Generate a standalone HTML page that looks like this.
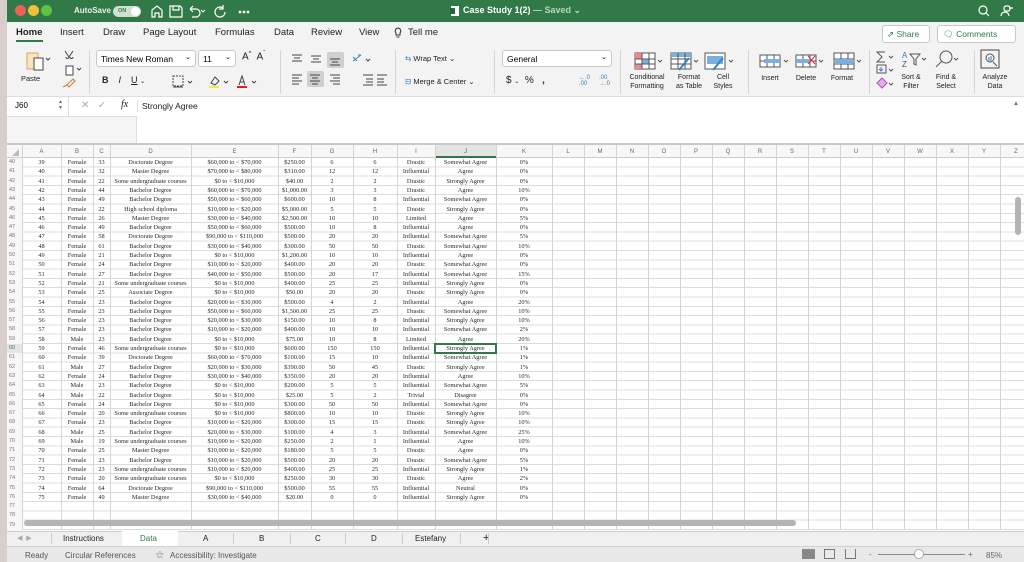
<!DOCTYPE html>
<html><head><meta charset="utf-8">
<style>
*{box-sizing:border-box;margin:0;padding:0}
body{width:1024px;height:562px;overflow:hidden;background:#d8cfcc;font-family:"Liberation Sans",sans-serif;position:relative}
.abs{position:absolute}
#win{position:absolute;left:7px;top:0;width:1017px;height:562px;background:#f3f3f3;overflow:hidden}
#title{position:absolute;left:0;top:0;width:1017px;height:22px;background:#317a48}
.tl{position:absolute;top:5px;width:11px;height:11px;border-radius:50%}
.wt{color:#fff;font-size:8px;position:absolute}
.tab{position:absolute;top:27px;font-size:9.5px;color:#222}
.t8{position:absolute;font-size:8px;color:#222;white-space:nowrap}
.t7{position:absolute;font-size:7px;color:#222;white-space:nowrap;text-align:center;line-height:8.5px}
.sep{position:absolute;top:50px;width:1px;height:44px;background:#d4d4d4}
.box{position:absolute;background:#fff;border:1px solid #c8c8c8;border-radius:3px}
#grid{position:absolute;left:0;top:143px;width:1017px;height:388px;background:#fff}
.vl{position:absolute;top:2px;width:1px;height:385px;background:#d4d4d4}
.r{position:absolute;left:0;height:9.3px;display:flex;font-family:"Liberation Serif",serif;font-size:6.3px;color:#2a2a2a;line-height:9.3px;white-space:nowrap}
.r span{display:block;text-align:center;overflow:hidden}
.r span:first-child{text-align:left;padding-left:2px;font-family:"Liberation Sans",sans-serif;color:#777;font-size:5.5px}
.w0{width:15px}.w1{width:39px}.w2{width:32px}.w3{width:17px}.w4{width:81px}.w5{width:87px}.w6{width:33px}.w7{width:42px}.w8{width:44px}.w9{width:38px}.w10{width:61px}.w11{width:56px}
.ch{position:absolute;top:6px;font-size:6px;color:#666;text-align:center}
</style></head><body>
<div id="win">
<div id="title">
 <div class="tl" style="left:8px;background:#ee5f57"></div>
 <div class="tl" style="left:21px;background:#f4bd3a"></div>
 <div class="tl" style="left:34px;background:#5ec443"></div>
 <div class="wt" style="left:67px;top:6px;font-weight:bold;opacity:.9">AutoSave</div>
 <div class="abs" style="left:106px;top:6px;width:28px;height:11px;border-radius:6px;background:#cfe0d3"><span style="position:absolute;left:5px;top:2px;font-size:5.5px;color:#317a48;font-weight:bold">ON</span><span style="position:absolute;right:1px;top:1px;width:9px;height:9px;border-radius:50%;background:#fff"></span></div>
 <svg class="abs" style="left:143px;top:4px" width="115" height="15" fill="none" stroke="#fff" stroke-width="1.2"><path d="M2 13V6l5-4 5 4v7h-3V9H5v4z"/><path d="M22 2h8l2 2v9H20V2zM23 2v4h6V2"/><path d="M40 5h6a4 4 0 010 8h-4M40 5l3-3M40 5l3 3"/><path d="M51 6l2 2 2-2" stroke-width="1"/><path d="M73 4a5 5 0 10 2 4M73 1v4h-4"/><circle cx="90" cy="8" r=".8" fill="#fff"/><circle cx="94" cy="8" r=".8" fill="#fff"/><circle cx="98" cy="8" r=".8" fill="#fff"/></svg>
 <svg class="abs" style="left:443px;top:5px" width="10" height="12"><rect x="1" y="1" width="8" height="10" fill="#fff"/><rect x="0" y="3" width="5" height="6" fill="#1d6b3a"/></svg>
 <div class="wt" style="left:456px;top:5px;font-size:9px;font-weight:bold">Case Study 1(2) <span style="color:#b9d4c1">— Saved ⌄</span></div>
 <svg class="abs" style="left:970px;top:4px" width="40" height="14" fill="none" stroke="#fff" stroke-width="1.2"><circle cx="6" cy="6" r="4"/><path d="M9 9l3 3"/><rect x="27" y="2" width="6" height="5" rx="2"/><path d="M24 12a4 4 0 018 0M32 4h4"/></svg>
</div>
<!-- tabs -->
<div class="tab" style="left:9px;font-weight:bold">Home</div>
<div class="abs" style="left:9px;top:40px;width:27px;height:2px;background:#317a48"></div>
<div class="tab" style="left:53px">Insert</div>
<div class="tab" style="left:96px">Draw</div>
<div class="tab" style="left:136px">Page Layout</div>
<div class="tab" style="left:208px">Formulas</div>
<div class="tab" style="left:267px">Data</div>
<div class="tab" style="left:304px">Review</div>
<div class="tab" style="left:352px">View</div>
<svg class="abs" style="left:387px;top:27px" width="8" height="11" fill="none" stroke="#333" stroke-width="1"><path d="M4 1a3 3 0 00-2 5l0 2h4v-2a3 3 0 00-2-5zM2.5 10h3"/></svg>
<div class="tab" style="left:401px">Tell me</div>
<div class="box" style="left:875px;top:25px;width:48px;height:18px"><span style="position:absolute;left:4px;top:3px;font-size:8.5px;color:#317a48">⇗ Share</span></div>
<div class="box" style="left:930px;top:25px;width:79px;height:18px"><span style="position:absolute;left:5px;top:3px;font-size:8.5px;color:#317a48">🗨 Comments</span></div>
<!-- ribbon -->
<svg class="abs" style="left:12px;top:49px" width="65" height="44" fill="none" stroke="#444" stroke-width="1"><rect x="8" y="4" width="11" height="16" fill="#fbe4c3" stroke="#e0a050"/><rect x="15" y="9" width="9" height="12" fill="#fff"/><path d="M27 9l2 2 2-2"/><path d="M46 2l4 6 4-6M47 8a1.5 1.5 0 103 0M51 8a1.5 1.5 0 103 0"/><rect x="47" y="17" width="7" height="9" fill="#fff"/><path d="M58 19l2 2 2-2"/><path d="M48 36l6-6 2 2-6 6z" stroke="#d08030"/><path d="M44 38l4-2" stroke="#d08030"/></svg>
<div class="t8" style="left:14px;top:74px;font-size:7.5px">Paste</div>
<div class="sep" style="left:82px"></div>
<div class="box" style="left:89px;top:50px;width:100px;height:17px"><span style="position:absolute;left:4px;top:3px;font-size:8.5px">Times New Roman</span><span style="position:absolute;right:4px;top:2px;font-size:7px">⌄</span></div>
<div class="box" style="left:191px;top:50px;width:38px;height:17px"><span style="position:absolute;left:4px;top:3px;font-size:8.5px">11</span><span style="position:absolute;right:4px;top:2px;font-size:7px">⌄</span></div>
<div class="t8" style="left:235px;top:51px;font-size:10px">A<sup style="font-size:6px">^</sup>&nbsp; A<sup style="font-size:6px">ˇ</sup></div>
<div class="t8" style="left:95px;top:75px;font-size:9px"><b>B</b>&nbsp;&nbsp;&nbsp;&nbsp;<i>I</i>&nbsp;&nbsp;&nbsp;&nbsp;<u>U</u> <span style="font-size:6px">⌄</span></div>
<svg class="abs" style="left:164px;top:74px" width="110" height="16" fill="none" stroke="#444" stroke-width="1"><rect x="2" y="2" width="10" height="10" stroke-dasharray="2 1"/><path d="M2 13h10"/><path d="M17 7l2 2 2-2"/><path d="M40 9l4-6 4 4-4 4z"/><rect x="38" y="12" width="10" height="2" fill="#f5e93c" stroke="none"/><path d="M53 7l2 2 2-2"/><path d="M68 11l3-9 3 9M69 8h4"/><rect x="66" y="12" width="10" height="2" fill="#e02020" stroke="none"/><path d="M81 7l2 2 2-2"/></svg>
<div class="sep" style="left:273px"></div>
<svg class="abs" style="left:282px;top:52px" width="100" height="38" stroke="#444" stroke-width="1"><path d="M3 3h10M5 6h6M3 9h10M22 4h10M24 7h6M22 10h10"/><rect x="38" y="0" width="17" height="16" rx="2" fill="#cfcfcf" stroke="none"/><path d="M41 7h10M43 10h6M41 13h10"/><path d="M3 23h10M3 26h7M3 29h10M3 32h7"/><rect x="18" y="19" width="17" height="16" rx="2" fill="#cfcfcf" stroke="none"/><path d="M21 23h10M23 26h6M21 29h10M23 32h6M41 23h10M44 26h7M41 29h10M44 32h7"/><path d="M64 9l8-6M72 3l-3 0M64 5l4 4" stroke="#3a80c0" fill="none"/><path d="M77 7l2 2 2-2" fill="none"/><path d="M74 23h10M77 27h7M77 30h7M74 33h10" /><path d="M88 23h10M88 27h7M88 30h7M88 33h10" /></svg>
<div class="sep" style="left:388px"></div>
<div class="t8" style="left:398px;top:54px;font-size:7.5px"><span style="color:#3a80c0">⇆</span> Wrap Text ⌄</div>
<div class="t8" style="left:398px;top:77px;font-size:7.5px"><span style="color:#3a80c0">⊟</span> Merge &amp; Center ⌄</div>
<div class="sep" style="left:487px"></div>
<div class="box" style="left:495px;top:50px;width:110px;height:17px"><span style="position:absolute;left:4px;top:3px;font-size:8.5px">General</span><span style="position:absolute;right:4px;top:2px;font-size:7px">⌄</span></div>
<div class="t8" style="left:499px;top:75px;font-size:10px">$ <span style="font-size:6px">⌄</span> &nbsp;%&nbsp;&nbsp; <b>,</b></div>
<div class="t8" style="left:572px;top:75px;font-size:6px;color:#3a80c0;line-height:6px">←.0<br>.00</div>
<div class="t8" style="left:592px;top:75px;font-size:6px;color:#3a80c0;line-height:6px">.00<br>→.0</div>
<div class="sep" style="left:613px"></div>
<svg class="abs" style="left:626px;top:50px" width="110" height="22" stroke="#555" stroke-width="1" fill="none"><rect x="2" y="3" width="20" height="16" fill="#fff"/><rect x="2" y="3" width="7" height="6" fill="#e88" stroke="none"/><rect x="9" y="9" width="7" height="5" fill="#7ab0e0" stroke="none"/><rect x="2" y="14" width="7" height="5" fill="#e88" stroke="none"/><path d="M2 9h20M2 14h20M9 3v16M16 3v16"/><path d="M25 10l2 2 2-2"/><rect x="38" y="3" width="20" height="16" fill="#fff"/><rect x="38" y="3" width="20" height="4" fill="#7ab0e0" stroke="none"/><path d="M38 9h20M38 14h20M45 3v16M52 3v16"/><path d="M46 20l10-12" stroke="#3a80c0" stroke-width="2"/><path d="M61 10l2 2 2-2"/><rect x="72" y="3" width="20" height="16" fill="#fff"/><rect x="74" y="6" width="16" height="8" fill="#7ab0e0" stroke="none"/><path d="M80 20l10-12" stroke="#3a80c0" stroke-width="2"/><path d="M96 10l2 2 2-2"/></svg>
<div class="t7" style="left:615px;top:74px;width:50px">Conditional<br>Formatting</div>
<div class="t7" style="left:662px;top:74px;width:40px">Format<br>as Table</div>
<div class="t7" style="left:700px;top:74px;width:32px">Cell<br>Styles</div>
<div class="sep" style="left:741px"></div>
<svg class="abs" style="left:751px;top:50px" width="115" height="22" stroke="#555" stroke-width="1" fill="none"><rect x="2" y="5" width="20" height="12" fill="#fff"/><path d="M2 11h20M9 5v12M16 5v12"/><rect x="6" y="9" width="16" height="4" fill="#7ab0e0" stroke="none"/><path d="M26 10l2 2 2-2"/><rect x="38" y="5" width="20" height="12" fill="#fff"/><path d="M38 11h20M45 5v12M52 5v12"/><rect x="38" y="9" width="14" height="4" fill="#7ab0e0" stroke="none"/><path d="M50 6l7 8M57 6l-7 8" stroke="#e03030"/><path d="M61 10l2 2 2-2"/><rect x="76" y="3" width="20" height="16" fill="#fff"/><path d="M76 9h20M76 14h20M83 3v16M90 3v16"/><rect x="77" y="9" width="18" height="5" fill="#7ab0e0" stroke="none"/><path d="M99 10l2 2 2-2"/></svg>
<div class="t7" style="left:746px;top:75px;width:34px">Insert</div>
<div class="t7" style="left:781px;top:75px;width:36px">Delete</div>
<div class="t7" style="left:817px;top:75px;width:36px">Format</div>
<div class="sep" style="left:862px"></div>
<svg class="abs" style="left:866px;top:49px" width="130" height="44" stroke="#555" stroke-width="1" fill="none"><path d="M12 3H4l5 5-5 5h8"/><path d="M16 7l2 2 2-2"/><rect x="4" y="16" width="9" height="8"/><path d="M8 18v4M6 20l2 2 2-2" stroke="#3a80c0"/><path d="M16 20l2 2 2-2"/><path d="M4 34l5-5 5 5-5 5z" stroke="#b050c0" fill="#e0b0ea"/><path d="M16 34l2 2 2-2"/><text x="29" y="9" font-size="8" fill="#3a80c0" stroke="none" font-family="Liberation Sans">A</text><text x="29" y="18" font-size="8" fill="#555" stroke="none" font-family="Liberation Sans">Z</text><path d="M37 5h10l-4 5v6l-2 -1v-5z"/><path d="M49 9l2 2 2-2"/><circle cx="73" cy="8" r="6"/><path d="M69 12l-6 6"/><path d="M81 9l2 2 2-2"/><rect x="108" y="1" width="18" height="18" stroke="#444"/><circle cx="117" cy="9" r="4"/><path d="M116 12v-4M118 12v-5" stroke="#3a80c0"/><path d="M120 13l4 4"/></svg>
<div class="t7" style="left:889px;top:74px;width:30px">Sort &amp;<br>Filter</div>
<div class="t7" style="left:922px;top:74px;width:34px">Find &amp;<br>Select</div>
<div class="sep" style="left:967px"></div>
<div class="t7" style="left:969px;top:74px;width:38px">Analyze<br>Data</div>
<!-- formula bar -->
<div class="abs" style="left:0;top:96px;width:1017px;height:47px;background:#fff;border-top:1px solid #ddd"></div>
<div class="abs" style="left:0;top:97px;width:62px;height:19px;border-right:1px solid #ddd"><span style="position:absolute;left:8px;top:4px;font-size:8px">J60</span><span style="position:absolute;right:5px;top:2px;font-size:5px;color:#666;line-height:6px">▲<br>▼</span></div>
<div class="abs" style="left:0;top:116px;width:130px;height:28px;background:#f5f5f5;border-top:1px solid #ddd;border-right:1px solid #ddd"></div>
<div class="t8" style="left:74px;top:100px;font-size:10px;color:#aaa">✕ &nbsp; ✓</div>
<div class="t8" style="left:114px;top:99px;font-size:10px;font-family:'Liberation Serif',serif;font-style:italic">fx</div>
<div class="abs" style="left:130px;top:100px;width:1px;height:12px;background:#ddd"></div>
<div class="t8" style="left:135px;top:101px;font-size:8.5px">Strongly Agree</div>
<div class="t8" style="left:1006px;top:101px;font-size:6px;color:#666">▲</div>
<!-- grid -->
<div id="grid">
 <div class="abs" style="left:0;top:0;width:1017px;height:2px;background:#c8c8c8"></div>
 <div class="abs" style="left:0;top:2px;width:1017px;height:13px;background:#f7f7f7;border-bottom:1px solid #ccc"></div>
 <div class="abs" style="left:428px;top:2px;width:61px;height:13px;background:#e4e4e4;border-bottom:2px solid #317a48"></div>
 <div class="abs" style="left:0;top:15px;width:15px;height:373px;background:#f7f7f7"></div>
 <div class="abs" style="left:15px;top:15px;width:1002px;height:373px;background:repeating-linear-gradient(to bottom,transparent 0,transparent 8.3px,#dcdcdc 8.3px,#dcdcdc 9.3px)"></div>
 <svg class="abs" style="left:5px;top:6px" width="8" height="8"><path d="M7 0V7H0z" fill="#bbb"/></svg>
 <div class="vl" style="left:15px"></div><div class="vl" style="left:54px"></div><div class="vl" style="left:86px"></div><div class="vl" style="left:103px"></div><div class="vl" style="left:184px"></div><div class="vl" style="left:271px"></div><div class="vl" style="left:304px"></div><div class="vl" style="left:346px"></div><div class="vl" style="left:390px"></div><div class="vl" style="left:428px"></div><div class="vl" style="left:489px"></div><div class="vl" style="left:545px"></div><div class="vl" style="left:577px"></div><div class="vl" style="left:609px"></div><div class="vl" style="left:641px"></div><div class="vl" style="left:673px"></div><div class="vl" style="left:705px"></div><div class="vl" style="left:737px"></div><div class="vl" style="left:769px"></div><div class="vl" style="left:801px"></div><div class="vl" style="left:833px"></div><div class="vl" style="left:865px"></div><div class="vl" style="left:897px"></div><div class="vl" style="left:929px"></div><div class="vl" style="left:961px"></div><div class="vl" style="left:993px"></div>
 <div class="ch" style="left:15px;width:39px">A</div><div class="ch" style="left:54px;width:32px">B</div><div class="ch" style="left:86px;width:17px">C</div><div class="ch" style="left:103px;width:81px">D</div><div class="ch" style="left:184px;width:87px">E</div><div class="ch" style="left:271px;width:33px">F</div><div class="ch" style="left:304px;width:42px">G</div><div class="ch" style="left:346px;width:44px">H</div><div class="ch" style="left:390px;width:38px">I</div><div class="ch" style="left:428px;width:61px">J</div><div class="ch" style="left:489px;width:56px">K</div><div class="ch" style="left:545px;width:32px">L</div><div class="ch" style="left:577px;width:32px">M</div><div class="ch" style="left:609px;width:32px">N</div><div class="ch" style="left:641px;width:32px">O</div><div class="ch" style="left:673px;width:32px">P</div><div class="ch" style="left:705px;width:32px">Q</div><div class="ch" style="left:737px;width:32px">R</div><div class="ch" style="left:769px;width:32px">S</div><div class="ch" style="left:801px;width:32px">T</div><div class="ch" style="left:833px;width:32px">U</div><div class="ch" style="left:865px;width:32px">V</div><div class="ch" style="left:897px;width:32px">W</div><div class="ch" style="left:929px;width:32px">X</div><div class="ch" style="left:961px;width:32px">Y</div><div class="ch" style="left:993px;width:32px">Z</div>
 <div style="position:absolute;left:0;top:15px">
<div class="r" style="top:0px"><span class="w0">40</span><span class="w1">39</span><span class="w2">Female</span><span class="w3">33</span><span class="w4">Doctorate Degree</span><span class="w5">$60,000 to &lt; $70,000</span><span class="w6">$250.00</span><span class="w7">6</span><span class="w8">6</span><span class="w9">Drastic</span><span class="w10">Somewhat Agree</span><span class="w11">0%</span></div>
<div class="r" style="top:9.3px"><span class="w0">41</span><span class="w1">40</span><span class="w2">Female</span><span class="w3">32</span><span class="w4">Master Degree</span><span class="w5">$70,000 to &lt; $80,000</span><span class="w6">$310.00</span><span class="w7">12</span><span class="w8">12</span><span class="w9">Influential</span><span class="w10">Agree</span><span class="w11">0%</span></div>
<div class="r" style="top:18.6px"><span class="w0">42</span><span class="w1">41</span><span class="w2">Female</span><span class="w3">22</span><span class="w4">Some undergraduate courses</span><span class="w5">$0 to &lt; $10,000</span><span class="w6">$40.00</span><span class="w7">2</span><span class="w8">2</span><span class="w9">Drastic</span><span class="w10">Strongly Agree</span><span class="w11">0%</span></div>
<div class="r" style="top:27.9px"><span class="w0">43</span><span class="w1">42</span><span class="w2">Female</span><span class="w3">44</span><span class="w4">Bachelor Degree</span><span class="w5">$60,000 to &lt; $70,000</span><span class="w6">$1,000.00</span><span class="w7">3</span><span class="w8">3</span><span class="w9">Drastic</span><span class="w10">Agree</span><span class="w11">10%</span></div>
<div class="r" style="top:37.2px"><span class="w0">44</span><span class="w1">43</span><span class="w2">Female</span><span class="w3">49</span><span class="w4">Bachelor Degree</span><span class="w5">$50,000 to &lt; $60,000</span><span class="w6">$600.00</span><span class="w7">10</span><span class="w8">8</span><span class="w9">Influential</span><span class="w10">Somewhat Agree</span><span class="w11">0%</span></div>
<div class="r" style="top:46.5px"><span class="w0">45</span><span class="w1">44</span><span class="w2">Female</span><span class="w3">22</span><span class="w4">High school diploma</span><span class="w5">$10,000 to &lt; $20,000</span><span class="w6">$5,000.00</span><span class="w7">5</span><span class="w8">5</span><span class="w9">Drastic</span><span class="w10">Strongly Agree</span><span class="w11">0%</span></div>
<div class="r" style="top:55.8px"><span class="w0">46</span><span class="w1">45</span><span class="w2">Female</span><span class="w3">26</span><span class="w4">Master Degree</span><span class="w5">$30,000 to &lt; $40,000</span><span class="w6">$2,500.00</span><span class="w7">10</span><span class="w8">10</span><span class="w9">Limited</span><span class="w10">Agree</span><span class="w11">5%</span></div>
<div class="r" style="top:65.1px"><span class="w0">47</span><span class="w1">46</span><span class="w2">Female</span><span class="w3">49</span><span class="w4">Bachelor Degree</span><span class="w5">$50,000 to &lt; $60,000</span><span class="w6">$500.00</span><span class="w7">10</span><span class="w8">8</span><span class="w9">Influential</span><span class="w10">Agree</span><span class="w11">0%</span></div>
<div class="r" style="top:74.4px"><span class="w0">48</span><span class="w1">47</span><span class="w2">Female</span><span class="w3">58</span><span class="w4">Doctorate Degree</span><span class="w5">$90,000 to &lt; $110,000</span><span class="w6">$500.00</span><span class="w7">20</span><span class="w8">20</span><span class="w9">Influential</span><span class="w10">Somewhat Agree</span><span class="w11">5%</span></div>
<div class="r" style="top:83.7px"><span class="w0">49</span><span class="w1">48</span><span class="w2">Female</span><span class="w3">61</span><span class="w4">Bachelor Degree</span><span class="w5">$30,000 to &lt; $40,000</span><span class="w6">$300.00</span><span class="w7">50</span><span class="w8">50</span><span class="w9">Drastic</span><span class="w10">Somewhat Agree</span><span class="w11">10%</span></div>
<div class="r" style="top:93px"><span class="w0">50</span><span class="w1">49</span><span class="w2">Female</span><span class="w3">21</span><span class="w4">Bachelor Degree</span><span class="w5">$0 to &lt; $10,000</span><span class="w6">$1,200.00</span><span class="w7">10</span><span class="w8">10</span><span class="w9">Influential</span><span class="w10">Agree</span><span class="w11">0%</span></div>
<div class="r" style="top:102.3px"><span class="w0">51</span><span class="w1">50</span><span class="w2">Female</span><span class="w3">24</span><span class="w4">Bachelor Degree</span><span class="w5">$10,000 to &lt; $20,000</span><span class="w6">$400.00</span><span class="w7">20</span><span class="w8">20</span><span class="w9">Drastic</span><span class="w10">Somewhat Agree</span><span class="w11">0%</span></div>
<div class="r" style="top:111.6px"><span class="w0">52</span><span class="w1">51</span><span class="w2">Female</span><span class="w3">27</span><span class="w4">Bachelor Degree</span><span class="w5">$40,000 to &lt; $50,000</span><span class="w6">$500.00</span><span class="w7">20</span><span class="w8">17</span><span class="w9">Influential</span><span class="w10">Somewhat Agree</span><span class="w11">15%</span></div>
<div class="r" style="top:120.9px"><span class="w0">53</span><span class="w1">52</span><span class="w2">Female</span><span class="w3">21</span><span class="w4">Some undergraduate courses</span><span class="w5">$0 to &lt; $10,000</span><span class="w6">$400.00</span><span class="w7">25</span><span class="w8">25</span><span class="w9">Influential</span><span class="w10">Strongly Agree</span><span class="w11">0%</span></div>
<div class="r" style="top:130.2px"><span class="w0">54</span><span class="w1">53</span><span class="w2">Female</span><span class="w3">25</span><span class="w4">Associate Degree</span><span class="w5">$0 to &lt; $10,000</span><span class="w6">$50.00</span><span class="w7">20</span><span class="w8">20</span><span class="w9">Drastic</span><span class="w10">Strongly Agree</span><span class="w11">0%</span></div>
<div class="r" style="top:139.5px"><span class="w0">55</span><span class="w1">54</span><span class="w2">Female</span><span class="w3">23</span><span class="w4">Bachelor Degree</span><span class="w5">$20,000 to &lt; $30,000</span><span class="w6">$500.00</span><span class="w7">4</span><span class="w8">2</span><span class="w9">Influential</span><span class="w10">Agree</span><span class="w11">20%</span></div>
<div class="r" style="top:148.8px"><span class="w0">56</span><span class="w1">55</span><span class="w2">Female</span><span class="w3">23</span><span class="w4">Bachelor Degree</span><span class="w5">$50,000 to &lt; $60,000</span><span class="w6">$1,500.00</span><span class="w7">25</span><span class="w8">25</span><span class="w9">Drastic</span><span class="w10">Somewhat Agree</span><span class="w11">10%</span></div>
<div class="r" style="top:158.1px"><span class="w0">57</span><span class="w1">56</span><span class="w2">Female</span><span class="w3">23</span><span class="w4">Bachelor Degree</span><span class="w5">$20,000 to &lt; $30,000</span><span class="w6">$150.00</span><span class="w7">10</span><span class="w8">8</span><span class="w9">Influential</span><span class="w10">Strongly Agree</span><span class="w11">10%</span></div>
<div class="r" style="top:167.4px"><span class="w0">58</span><span class="w1">57</span><span class="w2">Female</span><span class="w3">23</span><span class="w4">Bachelor Degree</span><span class="w5">$10,000 to &lt; $20,000</span><span class="w6">$400.00</span><span class="w7">10</span><span class="w8">10</span><span class="w9">Influential</span><span class="w10">Somewhat Agree</span><span class="w11">2%</span></div>
<div class="r" style="top:176.7px"><span class="w0">59</span><span class="w1">58</span><span class="w2">Male</span><span class="w3">23</span><span class="w4">Bachelor Degree</span><span class="w5">$0 to &lt; $10,000</span><span class="w6">$75.00</span><span class="w7">10</span><span class="w8">8</span><span class="w9">Limited</span><span class="w10">Agree</span><span class="w11">20%</span></div>
<div class="r" style="top:186px"><span class="w0" style="color:#317a48;background:#e4e4e4">60</span><span class="w1">59</span><span class="w2">Female</span><span class="w3">46</span><span class="w4">Some undergraduate courses</span><span class="w5">$0 to &lt; $10,000</span><span class="w6">$600.00</span><span class="w7">150</span><span class="w8">150</span><span class="w9">Influential</span><span class="w10" style="outline:2px solid #317a48;outline-offset:-1px">Strongly Agree</span><span class="w11">1%</span></div>
<div class="r" style="top:195.3px"><span class="w0">61</span><span class="w1">60</span><span class="w2">Female</span><span class="w3">39</span><span class="w4">Doctorate Degree</span><span class="w5">$60,000 to &lt; $70,000</span><span class="w6">$100.00</span><span class="w7">15</span><span class="w8">10</span><span class="w9">Influential</span><span class="w10">Somewhat Agree</span><span class="w11">1%</span></div>
<div class="r" style="top:204.6px"><span class="w0">62</span><span class="w1">61</span><span class="w2">Male</span><span class="w3">27</span><span class="w4">Bachelor Degree</span><span class="w5">$20,000 to &lt; $30,000</span><span class="w6">$390.00</span><span class="w7">50</span><span class="w8">45</span><span class="w9">Drastic</span><span class="w10">Strongly Agree</span><span class="w11">1%</span></div>
<div class="r" style="top:213.9px"><span class="w0">63</span><span class="w1">62</span><span class="w2">Female</span><span class="w3">24</span><span class="w4">Bachelor Degree</span><span class="w5">$30,000 to &lt; $40,000</span><span class="w6">$350.00</span><span class="w7">20</span><span class="w8">20</span><span class="w9">Influential</span><span class="w10">Agree</span><span class="w11">10%</span></div>
<div class="r" style="top:223.2px"><span class="w0">64</span><span class="w1">63</span><span class="w2">Male</span><span class="w3">23</span><span class="w4">Bachelor Degree</span><span class="w5">$0 to &lt; $10,000</span><span class="w6">$200.00</span><span class="w7">5</span><span class="w8">5</span><span class="w9">Influential</span><span class="w10">Somewhat Agree</span><span class="w11">5%</span></div>
<div class="r" style="top:232.5px"><span class="w0">65</span><span class="w1">64</span><span class="w2">Male</span><span class="w3">22</span><span class="w4">Bachelor Degree</span><span class="w5">$0 to &lt; $10,000</span><span class="w6">$25.00</span><span class="w7">5</span><span class="w8">2</span><span class="w9">Trivial</span><span class="w10">Disagree</span><span class="w11">0%</span></div>
<div class="r" style="top:241.8px"><span class="w0">66</span><span class="w1">65</span><span class="w2">Female</span><span class="w3">24</span><span class="w4">Bachelor Degree</span><span class="w5">$0 to &lt; $10,000</span><span class="w6">$300.00</span><span class="w7">50</span><span class="w8">50</span><span class="w9">Influential</span><span class="w10">Somewhat Agree</span><span class="w11">0%</span></div>
<div class="r" style="top:251.1px"><span class="w0">67</span><span class="w1">66</span><span class="w2">Female</span><span class="w3">20</span><span class="w4">Some undergraduate courses</span><span class="w5">$0 to &lt; $10,000</span><span class="w6">$800.00</span><span class="w7">10</span><span class="w8">10</span><span class="w9">Drastic</span><span class="w10">Strongly Agree</span><span class="w11">10%</span></div>
<div class="r" style="top:260.4px"><span class="w0">68</span><span class="w1">67</span><span class="w2">Female</span><span class="w3">23</span><span class="w4">Bachelor Degree</span><span class="w5">$10,000 to &lt; $20,000</span><span class="w6">$300.00</span><span class="w7">15</span><span class="w8">15</span><span class="w9">Drastic</span><span class="w10">Strongly Agree</span><span class="w11">10%</span></div>
<div class="r" style="top:269.7px"><span class="w0">69</span><span class="w1">68</span><span class="w2">Male</span><span class="w3">25</span><span class="w4">Bachelor Degree</span><span class="w5">$20,000 to &lt; $30,000</span><span class="w6">$100.00</span><span class="w7">4</span><span class="w8">3</span><span class="w9">Influential</span><span class="w10">Somewhat Agree</span><span class="w11">25%</span></div>
<div class="r" style="top:279px"><span class="w0">70</span><span class="w1">69</span><span class="w2">Male</span><span class="w3">19</span><span class="w4">Some undergraduate courses</span><span class="w5">$10,000 to &lt; $20,000</span><span class="w6">$250.00</span><span class="w7">2</span><span class="w8">1</span><span class="w9">Influential</span><span class="w10">Agree</span><span class="w11">10%</span></div>
<div class="r" style="top:288.3px"><span class="w0">71</span><span class="w1">70</span><span class="w2">Female</span><span class="w3">25</span><span class="w4">Master Degree</span><span class="w5">$10,000 to &lt; $20,000</span><span class="w6">$180.00</span><span class="w7">5</span><span class="w8">5</span><span class="w9">Drastic</span><span class="w10">Agree</span><span class="w11">0%</span></div>
<div class="r" style="top:297.6px"><span class="w0">72</span><span class="w1">71</span><span class="w2">Female</span><span class="w3">23</span><span class="w4">Bachelor Degree</span><span class="w5">$10,000 to &lt; $20,000</span><span class="w6">$500.00</span><span class="w7">20</span><span class="w8">20</span><span class="w9">Drastic</span><span class="w10">Somewhat Agree</span><span class="w11">5%</span></div>
<div class="r" style="top:306.9px"><span class="w0">73</span><span class="w1">72</span><span class="w2">Female</span><span class="w3">23</span><span class="w4">Some undergraduate courses</span><span class="w5">$10,000 to &lt; $20,000</span><span class="w6">$400.00</span><span class="w7">25</span><span class="w8">25</span><span class="w9">Influential</span><span class="w10">Strongly Agree</span><span class="w11">1%</span></div>
<div class="r" style="top:316.2px"><span class="w0">74</span><span class="w1">73</span><span class="w2">Female</span><span class="w3">20</span><span class="w4">Some undergraduate courses</span><span class="w5">$0 to &lt; $10,000</span><span class="w6">$250.00</span><span class="w7">30</span><span class="w8">30</span><span class="w9">Drastic</span><span class="w10">Agree</span><span class="w11">2%</span></div>
<div class="r" style="top:325.5px"><span class="w0">75</span><span class="w1">74</span><span class="w2">Female</span><span class="w3">64</span><span class="w4">Doctorate Degree</span><span class="w5">$90,000 to &lt; $110,000</span><span class="w6">$500.00</span><span class="w7">55</span><span class="w8">55</span><span class="w9">Influential</span><span class="w10">Neutral</span><span class="w11">0%</span></div>
<div class="r" style="top:334.8px"><span class="w0">76</span><span class="w1">75</span><span class="w2">Female</span><span class="w3">49</span><span class="w4">Master Degree</span><span class="w5">$30,000 to &lt; $40,000</span><span class="w6">$20.00</span><span class="w7">0</span><span class="w8">0</span><span class="w9">Influential</span><span class="w10">Strongly Agree</span><span class="w11">0%</span></div>
<div class="r" style="top:344.1px"><span class="w0">77</span></div>
<div class="r" style="top:353.4px"><span class="w0">78</span></div>
<div class="r" style="top:362.7px"><span class="w0">79</span></div>
 </div>
 <div class="abs" style="left:17px;top:377px;width:772px;height:6px;border-radius:3px;background:#b4b4b4"></div>
 <div class="abs" style="left:1008px;top:54px;width:6px;height:38px;border-radius:3px;background:#b4b4b4"></div>
</div>
<!-- sheet tabs -->
<div class="abs" style="left:0;top:531px;width:1017px;height:15px;background:#f0f0f0;border-top:1px solid #ccc"></div>
<div class="abs" style="left:115px;top:531px;width:56px;height:15px;background:#fff"></div>
<div class="t8" style="left:10px;top:534px;color:#aaa;font-size:7px">◀ &nbsp;▶</div>
<div class="t8" style="left:56px;top:534px">Instructions</div>
<div class="t8" style="left:133px;top:534px;color:#317a48">Data</div>
<div class="t8" style="left:196px;top:534px">A</div>
<div class="t8" style="left:252px;top:534px">B</div>
<div class="t8" style="left:308px;top:534px">C</div>
<div class="t8" style="left:364px;top:534px">D</div>
<div class="t8" style="left:408px;top:534px">Estefany</div>
<div class="t8" style="left:476px;top:532px;font-size:11px">+</div>
<div class="abs" style="left:44px;top:533px;width:1px;height:11px;background:#ccc"></div>
<div class="abs" style="left:226px;top:533px;width:1px;height:11px;background:#ccc"></div>
<div class="abs" style="left:283px;top:533px;width:1px;height:11px;background:#ccc"></div>
<div class="abs" style="left:338px;top:533px;width:1px;height:11px;background:#ccc"></div>
<div class="abs" style="left:395px;top:533px;width:1px;height:11px;background:#ccc"></div>
<div class="abs" style="left:453px;top:533px;width:1px;height:11px;background:#ccc"></div>
<div class="abs" style="left:481px;top:533px;width:1px;height:11px;background:#ccc"></div>
<!-- status -->
<div class="abs" style="left:0;top:546px;width:1017px;height:16px;background:#e8e8e8;border-top:1px solid #d0d0d0"></div>
<div class="t8" style="left:18px;top:551px;color:#555">Ready</div>
<div class="t8" style="left:58px;top:551px;color:#555">Circular References</div>
<div class="t8" style="left:149px;top:550px;color:#777">⚝</div>
<div class="t8" style="left:163px;top:551px;color:#555">Accessibility: Investigate</div>
<div class="abs" style="left:795px;top:549px;width:13px;height:10px;background:#888"></div>
<div class="abs" style="left:817px;top:549px;width:11px;height:10px;border:1px solid #777"></div>
<div class="abs" style="left:838px;top:549px;width:11px;height:10px;border:1px solid #777;border-top:none"></div>
<div class="t8" style="left:862px;top:550px;color:#666">-</div>
<div class="abs" style="left:871px;top:554px;width:87px;height:1px;background:#888"></div>
<div class="abs" style="left:907px;top:549px;width:10px;height:10px;border-radius:50%;background:#fff;border:1px solid #aaa"></div>
<div class="t8" style="left:961px;top:550px;color:#666">+</div>
<div class="t8" style="left:979px;top:551px;color:#666">85%</div>
</div>
</body></html>
